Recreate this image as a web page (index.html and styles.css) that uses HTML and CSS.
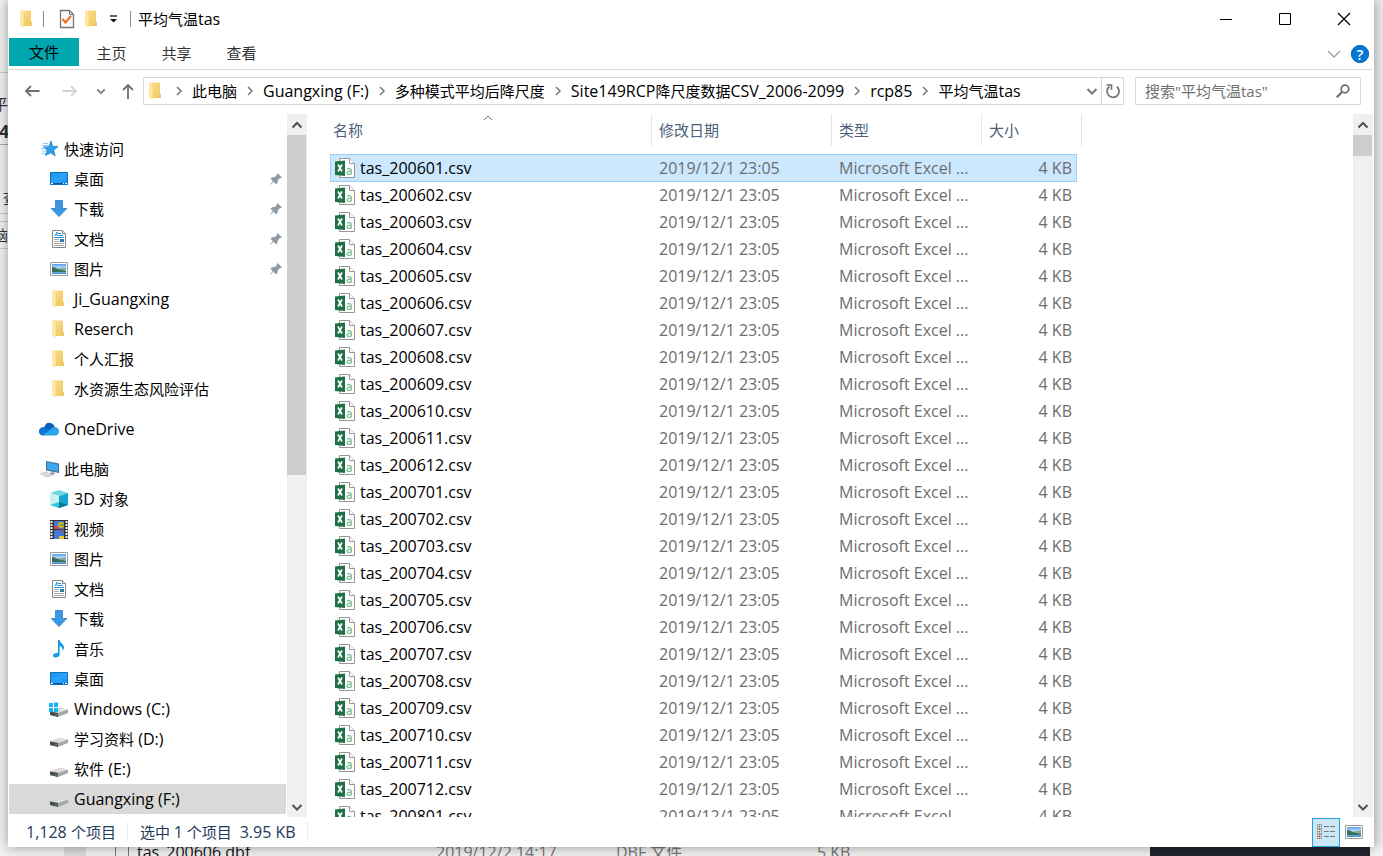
FILE: index.html
```html
<!DOCTYPE html>
<html lang="zh-CN">
<head>
<meta charset="utf-8">
<title>平均气温tas</title>
<link rel="stylesheet" href="styles.css">
</head>
<body>
<svg class="defs" aria-hidden="true">
  <defs>
    <linearGradient id="g-fold" x1="0" x2="1" y1="0" y2="1"><stop offset="0" stop-color="#fbe08e"/><stop offset="1" stop-color="#edc65f"/></linearGradient>
    <linearGradient id="g-blue" x1="0" x2="1" y1="0" y2="1"><stop offset="0" stop-color="#1193f5"/><stop offset=".5" stop-color="#2ba3fb"/><stop offset="1" stop-color="#0f95fb"/></linearGradient>
    <linearGradient id="g-sky" x1="0" x2="0" y1="0" y2="1"><stop offset="0" stop-color="#5b9cf0"/><stop offset=".5" stop-color="#d6edfb"/><stop offset="1" stop-color="#3f86c4"/></linearGradient>
    <linearGradient id="g-drive" x1="0" x2="1" y1="0" y2="0"><stop offset="0" stop-color="#cfcfd2"/><stop offset="1" stop-color="#ececee"/></linearGradient>
  </defs>
  <symbol id="folder" viewBox="0 0 20 20">
    <path d="M3 1.500h11v11.500l1 0v4H3z" fill="url(#g-fold)"/>
    <path d="M3 1.500l4 2v14.500l-1.200.6L3 16z" fill="#ffe9a6"/>
    <path d="M7 3.500v14" stroke="#f0cd74" stroke-width=".6"/>
  </symbol>
  <symbol id="csv" viewBox="0 0 20 20">
    <path d="M4.500.500h10l5 5v14h-15z" fill="#fff" stroke="#979797"/>
    <path d="M14.500.500v5h5" fill="#fff" stroke="#979797"/>
    <path d="M0 3.500l10-1v15.500l-10-1z" fill="#1e7145"/>
    <path d="M3 6.500l4 7M7 6.500l-4 7" stroke="#fff" stroke-width="1.700"/>
    <path d="M12.200 11.200c1-.9 4-1 4 .9v4.400M16.200 13.200c-5-.3-5.300 3.300-2.500 3.300 1.300 0 2.500-.8 2.500-2" fill="none" stroke="#7ab896" stroke-width="1.200"/>
  </symbol>
  <symbol id="star" viewBox="0 0 20 20">
    <path d="M12 2l1.600 5.400 5.400.2-4.300 3.500 1.500 5.700-4.700-3-5 2.700 1.700-5.200L4.500 8l5.200-.3z" fill="#2e9fe6" stroke="#1687d0" stroke-width=".8"/>
    <path d="M4 4.500h5M3 6.500h6M2 9.500h3M3 12h4M2.500 14.500h4" stroke="#79bde9" stroke-width=".8"/>
  </symbol>
  <symbol id="desktop" viewBox="0 0 20 20">
    <path d="M1.500 3.500h17v12h-17z" fill="url(#g-blue)" stroke="#0d72b8"/>
    <path d="M2 14.500h16" stroke="#085b99"/><path d="M2 14.500h2M14 14.500h1M16 14.500h2" stroke="#fff"/>
  </symbol>
  <symbol id="download" viewBox="0 0 20 20">
    <path d="M6.500 1.500h7v8h4.300L10 17.600 2.200 9.500h4.300z" fill="#3b96e3" stroke="#277dc9" stroke-width=".8"/>
  </symbol>
  <symbol id="doc" viewBox="0 0 20 20">
    <path d="M3.500 1.500h10l3 3v14h-13z" fill="#fff" stroke="#888"/><path d="M13.500 1.500v3h3" fill="#eee" stroke="#888"/>
    <path d="M6 7l2-4v4M9 4.500h3M9 6.500h5M5 8.500h10" stroke="#2b92d4" fill="none"/>
    <path d="M5 10.500h5M5 12.500h5M5 14.500h10M5 16.500h10" stroke="#aaa"/><path d="M11 10h4v3h-4z" fill="#2d7da9"/>
  </symbol>
  <symbol id="picture" viewBox="0 0 20 20">
    <path d="M1.500 3.500h17v13h-17z" fill="#fff" stroke="#9b9b9b"/>
    <path d="M3 5h14v10H3z" fill="url(#g-sky)"/>
    <path d="M3 8c3 .2 5 1.800 7 2 3 .4 4 1.500 7 1.800V13H3z" fill="#39705c"/>
    <path d="M9 10c2-1.500 5-.5 8-1.500v3z" fill="#7da98c"/>
  </symbol>
  <symbol id="cloud" viewBox="0 0 20 20">
    <path d="M5 9C6 4.500 9 3 11 4c2 0 4 1.500 4.800 4L10 12z" fill="#0f5fb8"/>
    <path d="M4 16.500C1 16.500-.500 14 0 11.500.5 8.800 3.500 7.500 6 8.200L16 14z" fill="#0e76cf"/>
    <path d="M3 16.500l9-6.500c1-1.700 3-2.500 5-1.800 2 .6 3 2.200 3 4.300s-1.500 4-4 4z" fill="#29a4ea"/>
  </symbol>
  <symbol id="pc" viewBox="0 0 20 20">
    <path d="M7 2l13 2.500V14L7 11.500z" fill="#4d6f91"/><path d="M8 3.200l11 2.200v7.200L8 10.300z" fill="#3aa9f0"/>
    <path d="M12 13l4 .7-1 2-4-.5z" fill="#8998a6"/><path d="M1 14.500l6-1.500 7 3-6 2z" fill="#d5dade" stroke="#aab2b8" stroke-width=".5"/>
  </symbol>
  <symbol id="cube" viewBox="0 0 20 20">
    <path d="M1 4l9-3 9 3-9 3z" fill="#6fd6e2"/><path d="M1 4l9 3v12l-9-3z" fill="#c9f1f2"/><path d="M19 4l-9 3v12l9-3z" fill="#13a7d2"/>
    <path d="M1 16l9-3v6z" fill="#36c5da"/><path d="M10 13l9 3-9 3z" fill="#077b98"/>
  </symbol>
  <symbol id="film" viewBox="0 0 20 20">
    <path d="M1 1h18v19H1z" fill="#333"/><path d="M5 2h10v8H5zM5 11h10v9H5z" fill="#4778d2"/>
    <path d="M2.500 2v18M17.500 2v18" stroke="#f3f3f3" stroke-width="2" stroke-dasharray="2 1"/>
    <path d="M5 7h4v3H5z" fill="#d34545"/><circle cx="12" cy="6" r="3" fill="#e0b827"/><path d="M10 6h5" stroke="#5a9e3e" stroke-width="1.500"/><path d="M11 10h4l-2 4z" fill="#9c4424"/><path d="M10 17h5v3h-5z" fill="#f2c72d"/>
  </symbol>
  <symbol id="music" viewBox="0 0 20 20">
    <path d="M9 1h1.600c.4 3 4.400 4 4.400 7.500 0 1.500-.7 2.500-1.500 3.500.5-3-1-4.500-2.900-5v8.500c0 2-2 3-4 3-1.600 0-2.600-.7-2.600-1.900 0-1.800 2.500-3 5-2.500z" fill="#129ae8"/>
  </symbol>
  <symbol id="drive" viewBox="0 0 20 20">
    <path d="M1 12.500L11 9l8 1.500V14L9 18l-8-2z" fill="#a7a7aa"/>
    <path d="M1 12.500L11 9l8 1.500L9 14z" fill="url(#g-drive)"/>
    <path d="M1 12.500L9 14v4l-8-2z" fill="#484c4c"/><path d="M6 16h2" stroke="#48c957" stroke-width="1.200"/>
  </symbol>
  <symbol id="windrive" viewBox="0 0 20 20">
    <path d="M1 12.500L11 9l8 1.500V14L9 18l-8-2z" fill="#a7a7aa"/><path d="M1 12.500L11 9l8 1.500L9 14z" fill="url(#g-drive)"/>
    <path d="M1 12.500L9 14v4l-8-2z" fill="#484c4c"/><path d="M6 16h2" stroke="#48c957" stroke-width="1.200"/>
    <path d="M0 4h4v4H0zM5 3.500h4V8H5zM0 9h4v4H0zM5 9h4v4H5z" fill="#16b6ef"/>
  </symbol>
  <symbol id="pin" viewBox="0 0 14 14">
    <path d="M8.500 1L13 5.500l-1.500.7-.5-.2L8.700 8.400 8.500 11 7 12.300 4.500 9.700 1 13 .8 12.800l3-3.800L1.500 6.700 3 5.300l2.700-.2L8 2.900l-.2-.7z" fill="#8f9aa5"/>
  </symbol>
  <symbol id="chev-r" viewBox="0 0 10 10"><path d="M3 1l4 4-4 4" fill="none" stroke="#777" stroke-width="1.500"/></symbol>
  <symbol id="chev-d" viewBox="0 0 12 12"><path d="M1.500 4L6 8.500 10.500 4" fill="none" stroke="currentColor" stroke-width="2"/></symbol>
  <symbol id="chev-u" viewBox="0 0 12 12"><path d="M1.500 8.500L6 4l4.500 4.500" fill="none" stroke="currentColor" stroke-width="2"/></symbol>
</svg>

<div class="behind" aria-hidden="true">
  <div class="edge"><span class="e1">平</span><b class="e2">4</b><span class="e3">查</span><span class="e4">脑</span></div>
  <div class="under"><i class="pane"></i><i class="tick"></i><span class="u1">tas_200606.dbf</span><span class="u2">2019/12/2 14:17</span><span class="u3">DBF 文件</span><span class="u4">5 KB</span><i class="dark"></i></div>
</div>

<div class="window">
  <header class="titlebar">
    <svg class="i20"><use href="#folder"/></svg>
    <i class="vline"></i>
    <button class="qa" aria-label="属性"><svg width="16" height="20" viewBox="0 0 16 20"><path d="M1.500 1.500h9l4 4v13h-13z" fill="#f8f8f8" stroke="#777" stroke-width="1.300"/><path d="M10.500 1.500v4h4" fill="none" stroke="#777"/><path d="M3.500 10l3 3.500L12 7" fill="none" stroke="#f0661e" stroke-width="2"/></svg></button>
    <button class="qa" aria-label="新建文件夹"><svg class="i20"><use href="#folder"/></svg></button>
    <button class="qa caret" aria-label="自定义快速访问工具栏"><svg width="8" height="8"><path d="M0 1h7" stroke="#111" stroke-width="1.300"/><path d="M0 4h7L3.500 7.500z" fill="#111"/></svg></button>
    <i class="vline"></i>
    <h1>平均气温<span class="la">tas</span></h1>
    <div class="winbtns">
      <button aria-label="最小化"><svg width="14" height="14"><path d="M1 7.500h12" stroke="#000"/></svg></button>
      <button aria-label="最大化"><svg width="14" height="14"><path d="M1.500 1.500h11v11h-11z" fill="none" stroke="#000"/></svg></button>
      <button aria-label="关闭"><svg width="14" height="14"><path d="M1 1l12 12M13 1L1 13" stroke="#000" stroke-width="1.200"/></svg></button>
    </div>
  </header>

  <nav class="ribbon">
    <button class="file">文件</button><button>主页</button><button>共享</button><button>查看</button>
    <div class="ribbon-end">
      <button class="fold" aria-label="展开功能区"><svg width="14" height="14" viewBox="0 0 14 14"><path d="M1 4l6 6 6-6" fill="none" stroke="#a0a0a0" stroke-width="1.300"/></svg></button>
      <button class="help" aria-label="帮助">?</button>
    </div>
  </nav>

  <div class="addressrow">
    <div class="history">
      <button aria-label="后退"><svg width="16" height="16"><path d="M15.500 8H2M7 3L2 8l5 5" fill="none" stroke="#707070" stroke-width="1.800"/></svg></button>
      <button aria-label="前进"><svg width="16" height="16"><path d="M.500 8H14M9 3l5 5-5 5" fill="none" stroke="#d4d4d4" stroke-width="1.800"/></svg></button>
      <button class="recent" aria-label="最近浏览的位置"><svg width="10" height="10"><use href="#chev-d"/></svg></button>
      <button aria-label="上移"><svg width="14" height="16"><path d="M7 16V2M2 7l5-5 5 5" fill="none" stroke="#707070" stroke-width="1.800"/></svg></button>
    </div>
    <div class="address">
      <svg class="i20"><use href="#folder"/></svg>
      <ol>
        <li><svg><use href="#chev-r"/></svg><a href="#">此电脑</a></li>
        <li><svg><use href="#chev-r"/></svg><a href="#" class="la">Guangxing (F:)</a></li>
        <li><svg><use href="#chev-r"/></svg><a href="#">多种模式平均后降尺度</a></li>
        <li><svg><use href="#chev-r"/></svg><a href="#"><span class="la">Site149RCP</span>降尺度数据<span class="la">CSV_2006-2099</span></a></li>
        <li><svg><use href="#chev-r"/></svg><a href="#" class="la">rcp85</a></li>
        <li><svg><use href="#chev-r"/></svg><a href="#">平均气温<span class="la">tas</span></a></li>
      </ol>
      <button class="drop" aria-label="以前的位置"><svg width="12" height="12"><use href="#chev-d"/></svg></button>
      <button class="refresh" aria-label="刷新"><svg width="16" height="16"><path d="M4.500 3.500a6 6 0 1 0 7.500.3" fill="none" stroke="#777" stroke-width="1.800"/><path d="M1.500 2h5v5" fill="none" stroke="#777" stroke-width="1.600"/></svg></button>
    </div>
    <div class="search">
      <input type="search" aria-label="搜索" placeholder='搜索"平均气温tas"'>
      <svg width="14" height="14"><circle cx="9" cy="5" r="3.800" fill="none" stroke="#707070" stroke-width="1.800"/><path d="M6.300 7.700L.8 13.200" stroke="#707070" stroke-width="2.200"/></svg>
    </div>
  </div>

  <div class="content">
    <aside class="tree">
      <ul>
        <li class="top"><a href="#"><svg class="i20"><use href="#star"/></svg>快速访问</a></li>
        <li><a href="#"><svg class="i20"><use href="#desktop"/></svg>桌面<svg class="pin"><use href="#pin"/></svg></a></li>
        <li><a href="#"><svg class="i20"><use href="#download"/></svg>下载<svg class="pin"><use href="#pin"/></svg></a></li>
        <li><a href="#"><svg class="i20"><use href="#doc"/></svg>文档<svg class="pin"><use href="#pin"/></svg></a></li>
        <li><a href="#"><svg class="i20"><use href="#picture"/></svg>图片<svg class="pin"><use href="#pin"/></svg></a></li>
        <li><a href="#" class="la"><svg class="i20"><use href="#folder"/></svg>Ji_Guangxing</a></li>
        <li><a href="#" class="la"><svg class="i20"><use href="#folder"/></svg>Reserch</a></li>
        <li><a href="#"><svg class="i20"><use href="#folder"/></svg>个人汇报</a></li>
        <li><a href="#"><svg class="i20"><use href="#folder"/></svg>水资源生态风险评估</a></li>
      </ul>
      <ul>
        <li class="top"><a href="#" class="la"><svg class="i20"><use href="#cloud"/></svg>OneDrive</a></li>
      </ul>
      <ul>
        <li class="top"><a href="#"><svg class="i20"><use href="#pc"/></svg>此电脑</a></li>
        <li><a href="#"><svg class="i20"><use href="#cube"/></svg><span><span class="la">3D </span>对象</span></a></li>
        <li><a href="#"><svg class="i20"><use href="#film"/></svg>视频</a></li>
        <li><a href="#"><svg class="i20"><use href="#picture"/></svg>图片</a></li>
        <li><a href="#"><svg class="i20"><use href="#doc"/></svg>文档</a></li>
        <li><a href="#"><svg class="i20"><use href="#download"/></svg>下载</a></li>
        <li><a href="#"><svg class="i20"><use href="#music"/></svg>音乐</a></li>
        <li><a href="#"><svg class="i20"><use href="#desktop"/></svg>桌面</a></li>
        <li><a href="#" class="la"><svg class="i20"><use href="#windrive"/></svg>Windows (C:)</a></li>
        <li><a href="#"><svg class="i20"><use href="#drive"/></svg><span>学习资料<span class="la"> (D:)</span></span></a></li>
        <li><a href="#"><svg class="i20"><use href="#drive"/></svg><span>软件<span class="la"> (E:)</span></span></a></li>
        <li class="current"><a href="#" class="la"><svg class="i20"><use href="#drive"/></svg>Guangxing (F:)</a></li>
      </ul>
    </aside>
    <div class="scroll"><button aria-label="向上滚动"><svg width="12" height="12"><use href="#chev-u"/></svg></button><div class="track"><div class="thumb long"></div></div><button aria-label="向下滚动"><svg width="12" height="12"><use href="#chev-d"/></svg></button></div>

    <main class="files">
      <table>
        <colgroup><col class="c-name"><col class="c-date"><col class="c-type"><col class="c-size"><col class="c-end"></colgroup>
        <thead><tr>
          <th aria-sort="ascending"><span>名称</span><svg class="sort" width="12" height="8"><path d="M2 6l4-4 4 4" fill="none" stroke="#777"/></svg></th>
          <th><span>修改日期</span></th><th><span>类型</span></th><th colspan="2"><span>大小</span></th>
        </tr></thead>
        <tbody id="rows"></tbody>
      </table>
    </main>
    <div class="scroll"><button aria-label="向上滚动"><svg width="12" height="12"><use href="#chev-u"/></svg></button><div class="track"><div class="thumb short"></div></div><button aria-label="向下滚动"><svg width="12" height="12"><use href="#chev-d"/></svg></button></div>
  </div>

  <footer class="status">
    <span class="cell"><span class="la">1,128 </span>个项目</span>
    <span class="cell">选中 <span class="la">1</span> 个项目&nbsp; <span class="la">3.95 KB</span></span>
    <div class="views">
      <button class="on" aria-label="详细信息"><svg width="20" height="18"><path d="M1.500 1.500h4v4h-4zM1.500 6.500h4v4h-4zM1.500 11.500h4v4h-4z" fill="#fff" stroke="#999"/><path d="M3 3h1v1H3z" stroke="#347aa8"/><path d="M3 8h1v1H3z" stroke="#a5673b"/><path d="M3 13h1v1H3z" stroke="#c5261b"/><path d="M8 3.500h5M14 3.500h5M8 8.500h5M14 8.500h5M8 13.500h5M14 13.500h5" stroke="#777"/></svg></button>
      <button aria-label="大图标"><svg class="i20"><use href="#picture"/></svg></button>
    </div>
  </footer>
</div>
<script src="files.js"></script>
</body>
</html>
```
FILE: files.js
```js
const months = [];
for (let year = 2006; year <= 2007; year++) {
  for (let month = 1; month <= 12; month++) {
    months.push(`${year}${String(month).padStart(2, "0")}`);
  }
}
months.push("200801");

document.getElementById("rows").innerHTML = months.map((stamp, index) => `
  <tr${index === 0 ? ' class="selected"' : ""}>
    <td><a href="#"><svg class="i20"><use href="#csv"/></svg>tas_${stamp}.csv</a></td>
    <td>2019/12/1 23:05</td>
    <td>Microsoft Excel ...</td>
    <td class="size">4 KB</td>
  </tr>`).join("");
```
FILE: styles.css
```css
* { box-sizing: border-box; }
body {
  margin: 0;
  height: 100vh;
  overflow: hidden;
  padding: 0 9px 9px 8px;
  background: #ececec;
  font: 15px/20px "Open Sans", "Noto Sans CJK SC", sans-serif;
  color: #000;
}
button {
  display: flex;
  align-items: center;
  justify-content: center;
  padding: 0;
  border: 0;
  background: none;
  font: inherit;
  color: inherit;
}
a { color: inherit; text-decoration: none; }
ul, ol { list-style: none; margin: 0; padding: 0; }
svg { display: block; flex: none; }
.defs { position: absolute; width: 0; height: 0; }
.i20 { width: 20px; height: 20px; }
.la { font-size: 16px; }

/* Windows underneath */
.behind { position: absolute; inset: 0; overflow: hidden; color: #333; }
.behind span, .behind b, .behind i { position: absolute; white-space: nowrap; }
.edge { position: absolute; inset: 0 auto 0 0; width: 8px; overflow: hidden; background: linear-gradient(#ccc, #ccc) 0 72px / 8px 1px no-repeat, linear-gradient(#aaa, #aaa) 0 144px / 8px 1px no-repeat, linear-gradient(#ccc, #ccc) 0 213px / 8px 1px no-repeat, linear-gradient(#ccc, #ccc) 0 221px / 8px 1px no-repeat, linear-gradient(#ccc, #ccc) 0 248px / 8px 1px no-repeat, #f3f3f3; }
.edge .e1 { left: -7px; top: 94px; }
.edge .e2 { left: -1px; top: 121px; font-size: 18px; }
.edge .e3 { left: 3px; top: 188px; }
.edge .e4 { left: -7px; top: 225px; }
.under { position: absolute; inset: auto 0 0 0; height: 9px; background: #f2f2f2; font-size: 16px; color: #777; overflow: hidden; }
.under .pane { left: 64px; width: 22px; height: 9px; background: #ddd; }
.under .tick { left: 115px; width: 14px; height: 9px; border: solid #777; border-width: 0 1px; }
.under span { top: -5px; }
.under .u1 { left: 137px; color: #111; }
.under .u2 { left: 436px; }
.under .u3 { left: 616px; }
.under .u4 { left: 817px; }
.under .dark { left: 1150px; right: 13px; height: 9px; background: #22252e; }

.window {
  position: relative;
  display: flex;
  flex-direction: column;
  height: 100%;
  padding: 0 1px;
  background: #fff;
  box-shadow: 0 0 12px rgba(0, 0, 0, .4);
}

/* Title bar */
.titlebar { display: flex; align-items: center; height: 38px; padding-left: 8px; }
.vline { width: 1px; height: 16px; margin: 0 7px 0 6px; background: #8a8a8a; }
.titlebar .qa { width: 20px; margin-right: 5px; }
.titlebar > .vline + .qa { margin-left: 6px; }
.titlebar .caret { width: 14px; margin: 0 3px 0 0; }
.titlebar h1 { margin: 0; font-size: 15px; font-weight: 400; }
.winbtns { display: flex; margin-left: auto; }
.winbtns button { width: 59px; height: 38px; }

/* Ribbon */
.ribbon { display: flex; height: 32px; border-bottom: 1px solid #dadada; color: #333; }
.ribbon > button { width: 65px; height: 28px; padding-top: 2px; }
.ribbon .file { width: 70px; padding: 0; background: #00a6ae; color: #000; }
.ribbon-end { display: flex; align-items: center; gap: 10px; margin-left: auto; padding-right: 4px; }
.help { width: 18px; height: 18px; border-radius: 50%; background: #0078d4; color: #fff; font-weight: 600; outline: 1px solid #1c67a5; outline-offset: -1px; }

/* Address row */
.addressrow { display: flex; align-items: flex-start; padding: 7px 12px 9px 0; }
.history { display: flex; align-items: center; width: 134px; height: 28px; padding-left: 15px; color: #777; }
.history button { width: 16px; height: 28px; margin-right: 22px; }
.history .recent { width: 10px; margin: 0 14px 0 -4px; }
.history button:nth-child(4) { margin: 0; }
.address { display: flex; flex: 1; align-items: center; height: 28px; border: 1px solid #d9d9d9; min-width: 0; }
.address > .i20 { margin-left: 2px; }
.address ol { display: flex; flex: 1; min-width: 0; white-space: nowrap; }
.address li { display: flex; align-items: center; }
.address li svg { width: 10px; height: 10px; margin: 0 8px; }
.address .drop { width: 19px; height: 26px; color: #777; }
.address .refresh { width: 22px; height: 26px; border-left: 1px solid #d9d9d9; }
.search { display: flex; align-items: center; width: 226px; height: 28px; margin-left: 11px; padding: 0 10px 0 9px; border: 1px solid #d9d9d9; }
.search input { flex: 1; min-width: 0; padding: 0; border: 0; outline: 0; background: none; font: inherit; }
.search input::placeholder { color: #707070; opacity: 1; }

/* Content */
.content { display: flex; flex: 1; min-height: 0; }
.tree { width: 278px; padding-top: 20px; overflow: hidden; }
.tree ul + ul { margin-top: 10px; }
.tree a { display: flex; align-items: center; gap: 5px; width: 277px; height: 30px; padding: 0 3px 0 40px; }
.tree .top a { padding-left: 30px; }
.tree .pin { width: 14px; height: 14px; margin-left: auto; }
.tree .current a { background: #d9d9d9; }
.scroll { display: flex; flex-direction: column; width: 20px; background: #f0f0f0; color: #505050; }
.scroll button { width: 19px; height: 21px; }
.track { flex: 1; }
.thumb { width: 19px; background: #cdcdcd; }
.thumb.long { height: 340px; }
.thumb.short { height: 21px; }
.files { flex: 1; min-width: 0; padding-left: 23px; overflow: hidden; }
table { width: 752px; table-layout: fixed; border-collapse: separate; border-spacing: 0; font-size: 16px; color: #6d6d6d; }
.c-name { width: 322px; }
.c-date { width: 180px; }
.c-type { width: 150px; }
.c-size { width: 95px; }
.c-end { width: 5px; }
th { position: relative; padding: 0 0 8px; font-size: 15px; font-weight: 400; text-align: left; color: #4c607a; }
th span { display: flex; align-items: center; height: 32px; padding-left: 7px; border-right: 1px solid #e5e5e5; }
th:first-child span { padding-left: 3px; }
.sort { position: absolute; left: 152px; top: 0; }
td { height: 27px; padding: 0 0 0 7px; white-space: nowrap; }
td:first-child { padding-left: 5px; }
td a { display: flex; align-items: center; gap: 5px; color: #000; }
td.size { padding-right: 5px; text-align: right; }
.selected td { background: #cce8ff; border-top: 1px solid #99d1ff; box-shadow: 0 1px #99d1ff; }
.selected td:first-child { border-left: 1px solid #99d1ff; padding-left: 4px; }
.selected td.size { border-right: 1px solid #99d1ff; padding-right: 4px; }

/* Status bar */
.status { display: flex; align-items: center; height: 30px; padding-left: 17px; color: #1e395b; }
.cell { padding-right: 11px; margin-right: 12px; border-right: 1px solid #ececec; white-space: pre; }
.views { display: flex; margin-left: auto; padding-right: 9px; gap: 4px; }
.views button { height: 29px; width: 20px; }
.views .on { width: 28px; border: 1px solid #26a0da; background: #cce8f6; }
```
